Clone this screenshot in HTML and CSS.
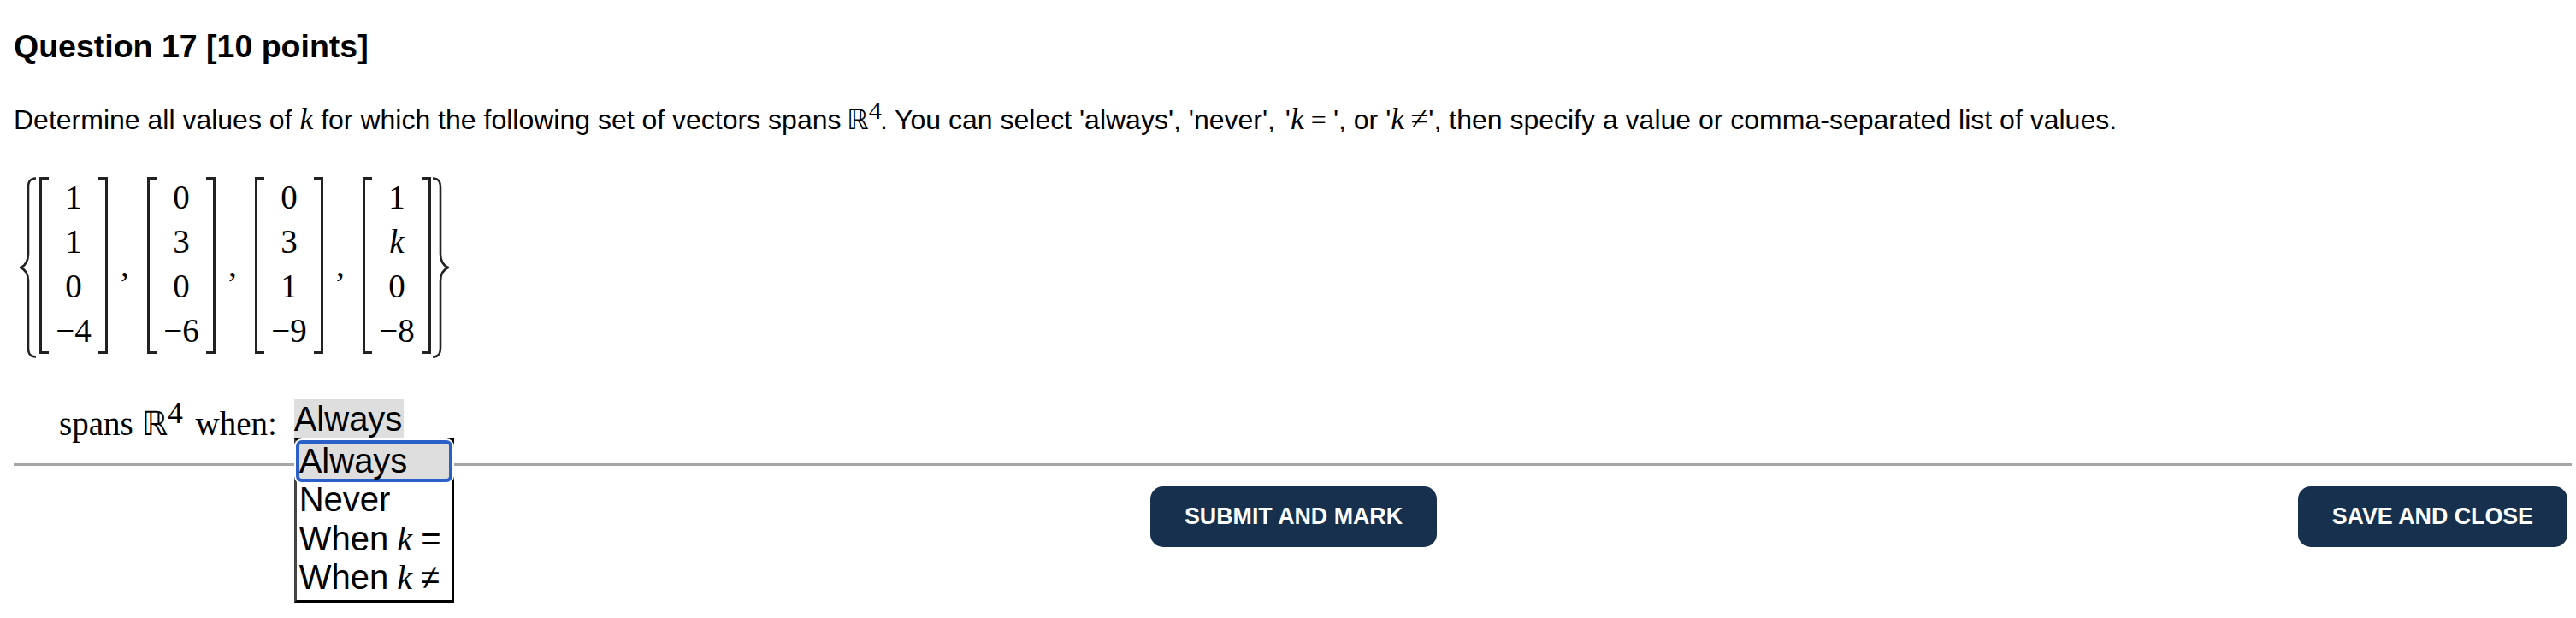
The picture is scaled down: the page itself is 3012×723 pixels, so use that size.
FILE: index.html
```html
<!DOCTYPE html>
<html lang="en">
<head>
    <meta charset="UTF-8">
    <title>Question 17</title>
    <link rel="stylesheet" href="styles.css">
</head>
<body>

    <h1 class="question-title">Question 17 [10 points]</h1>

    <p class="question-text">Determine all values of <i class="math">k</i> for which the following set of vectors spans <span class="reals">ℝ</span><sup class="power">4</sup>. You can select 'always', 'never', <span class="quoted">'<i class="math">k</i><span class="math-op">=</span>'</span>, or '<i class="math">k</i><span class="math-op ne">≠</span>', then specify a value or comma-separated list of values.</p>

    <div class="vector-set">
        <svg class="brace" viewBox="0 0 19 212"><path d="M19 1.5C13 1.5 10 4 10 12V90C10 100 6 104 1 106C6 108 10 112 10 122V200C10 208 13 210.5 19 210.5"/></svg>

        <div class="vector">
            <div class="bracket"></div>
            <div class="cells"><div>1</div><div>1</div><div>0</div><div>−4</div></div>
            <div class="bracket right"></div>
        </div>
        <div class="comma">,</div>
        <div class="vector">
            <div class="bracket"></div>
            <div class="cells"><div>0</div><div>3</div><div>0</div><div>−6</div></div>
            <div class="bracket right"></div>
        </div>
        <div class="comma">,</div>
        <div class="vector">
            <div class="bracket"></div>
            <div class="cells"><div>0</div><div>3</div><div>1</div><div>−9</div></div>
            <div class="bracket right"></div>
        </div>
        <div class="comma">,</div>
        <div class="vector">
            <div class="bracket"></div>
            <div class="cells"><div>1</div><div><i>k</i></div><div>0</div><div>−8</div></div>
            <div class="bracket right"></div>
        </div>

        <svg class="brace flip" viewBox="0 0 19 212"><path d="M19 1.5C13 1.5 10 4 10 12V90C10 100 6 104 1 106C6 108 10 112 10 122V200C10 208 13 210.5 19 210.5"/></svg>
    </div>

    <p class="answer">
        spans <span class="reals">ℝ</span><sup class="power">4</sup> <span class="when">when:</span>
        <span class="select">Always
            <span class="select-menu">
                <span class="option focused">Always</span>
                <span class="option">Never</span>
                <span class="option">When <i class="math">k</i> =</span>
                <span class="option">When <i class="math">k</i> ≠</span>
            </span>
        </span>
    </p>

    <hr class="divider">

    <div class="actions">
        <button type="button" class="action-button submit">SUBMIT AND MARK</button>
        <button type="button" class="action-button save">SAVE AND CLOSE</button>
    </div>

</body>
</html>
```

FILE: styles.css
```css
html, body {
    min-height: 723px;
}

body {
    font-family: "Liberation Sans", Arial, sans-serif;
    background-color: #fff;
    color: #000;
    margin: 0;
    padding: 33px 5px 0 16px;
    box-sizing: border-box;
}

.question-title {
    font-size: 37.5px;
    line-height: 42px;
    font-weight: bold;
    margin: 0;
}

.question-text {
    font-size: 32px;
    line-height: 36px;
    margin: 47px 0 0;
    white-space: nowrap;
}

.question-text .reals {
    margin-left: -2px;
}

.question-text .power {
    margin-right: -2px;
}

.quoted {
    margin-left: 3px;
}

.math {
    font-family: "Liberation Serif", serif;
    font-style: italic;
    font-size: 1.12em;
    line-height: 0;
}

.math-op {
    font-family: "Liberation Serif", serif;
    margin: 0 8px;
}

.math-op.ne {
    font-size: 1.15em;
    line-height: 0;
    margin: 0 1px 0 7px;
}

.reals {
    font-family: "DejaVu Sans", sans-serif;
}

.power {
    font-family: "Liberation Serif", serif;
    font-size: 0.95em;
    line-height: 0;
}

/* Set of column vectors */
.vector-set {
    display: flex;
    align-items: flex-start;
    margin: 49px 0 0 7px;
    font-family: "Liberation Serif", serif;
    font-size: 39px;
}

.brace {
    width: 19px;
    height: 212px;
    margin-right: 4px;
    flex: none;
}

.brace path {
    fill: none;
    stroke: #222;
    stroke-width: 2.6;
}

.brace.flip {
    transform: scaleX(-1);
    margin: 0 0 0 2px;
}

.vector {
    display: flex;
    width: 80px;
    height: 207px;
}

.bracket {
    width: 8px;
    border: solid #222;
    border-width: 3px 0 3px 3px;
    flex: none;
}

.bracket.right {
    border-width: 3px 3px 3px 0;
}

.cells {
    flex: 1;
    margin-top: -2px;
    text-align: center;
    line-height: 52px;
}

.comma {
    width: 46px;
    padding: 77px 0 0 15px;
    box-sizing: border-box;
    line-height: 52px;
}

/* Answer line with the open dropdown */
.answer {
    font-family: "Liberation Serif", serif;
    font-size: 39px;
    line-height: 46px;
    margin: 48px 0 0 53px;
}

.answer .power {
    font-size: 0.9em;
}

.when {
    margin-left: 5px;
}

.select {
    display: inline-block;
    position: relative;
    vertical-align: 5px;
    width: 128px;
    margin-left: 10px;
    font-family: "Liberation Sans", sans-serif;
    font-size: 40px;
    line-height: 46px;
    background-color: #dedede;
}

.select-menu {
    position: absolute;
    top: 46px;
    left: 0;
    width: 187px;
    height: 192px;
    box-sizing: border-box;
    background-color: #fff;
    border: 3px solid #000;
    border-left-color: #444;
    word-spacing: -1px;
}

.option {
    display: block;
    height: 45.5px;
    line-height: 40px;
    padding-left: 3px;
}

.option .math {
    font-size: 1em;
}

.option.focused {
    height: 49px;
    line-height: 40px;
    margin: -1px -1px 0;
    box-sizing: border-box;
    padding-left: 0;
    background-color: #dedede;
    border: 4px solid #2a60c8;
    border-radius: 7px;
    box-shadow: 0 0 0 2px #fff;
}

.divider {
    height: 3px;
    margin: 23px 0 0;
    border: none;
    background-color: #a6a6a6;
}

.actions {
    display: flex;
    margin-top: 24px;
    padding-right: 5px;
}

.action-button {
    height: 71px;
    padding: 0 40px;
    border: none;
    border-radius: 15px;
    background-color: #17304d;
    color: #fff;
    font-family: "Liberation Sans", sans-serif;
    font-size: 26.8px;
    font-weight: bold;
}

.submit {
    margin-left: 1329px;
}

.save {
    margin-left: auto;
}
```
